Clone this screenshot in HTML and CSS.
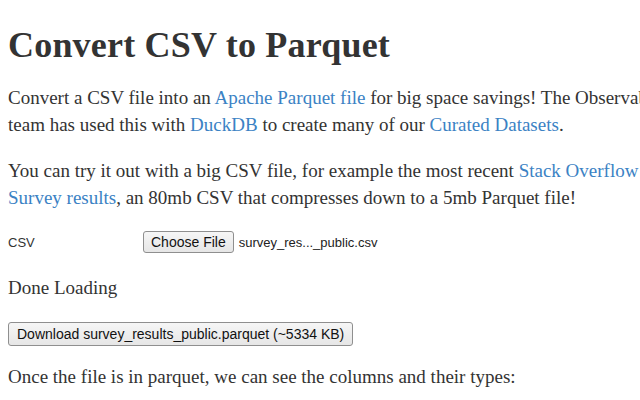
FILE: index.html
```html
<!DOCTYPE html>
<html>
<head>
<meta charset="utf-8">
<link rel="stylesheet" href="styles.css">
</head>
<body>
<main class="notebook">
  <h1 class="title">Convert CSV to Parquet</h1>
  <p class="para">Convert a CSV file into an <a href="#">Apache Parquet file</a> for big space savings! The Observable team has used this with <a href="#">DuckDB</a> to create many of our <a href="#">Curated Datasets</a>.</p>
  <p class="para">You can try it out with a big CSV file, for example the most recent <a href="#">Stack Overflow Survey results</a>, an 80mb CSV that compresses down to a 5mb Parquet file!</p>
  <form class="input-row">
    <label class="input-label">CSV</label>
    <div class="file-field">
      <span class="file-btn">Choose File</span>
      <span class="file-name">survey_res..._public.csv</span>
    </div>
  </form>
  <p class="para status">Done Loading</p>
  <div class="download-row">
    <button class="download-btn" type="button">Download survey_results_public.parquet (~5334 KB)</button>
  </div>
  <p class="para last">Once the file is in parquet, we can see the columns and their types:</p>
</main>
</body>
</html>
```
FILE: styles.css
```css
html, body {
  margin: 0;
  padding: 0;
  background: #fff;
  overflow: hidden;
}
body {
  width: 640px;
  height: 400px;
}
.notebook {
  padding: 0 8px;
  width: 670px;
  color: #333;
  font-family: "Liberation Serif", serif;
  font-size: 19px;
  line-height: 27px;
}
.title {
  margin: 25px 0 0;
  font-size: 36px;
  line-height: 40px;
  font-weight: 700;
  color: #333;
  letter-spacing: 0.2px;
}
.para {
  margin: 19px 0 0;
}
.para a {
  color: #3b82c4;
  text-decoration: none;
}
.input-row {
  display: flex;
  align-items: center;
  margin: 20px 0 0;
  font-family: "Liberation Sans", Arial, sans-serif;
  font-size: 13px;
  color: #333;
  height: 22px;
}
.input-label {
  width: 135px;
}
.file-field {
  display: flex;
  align-items: center;
  gap: 5px;
  color: #222;
}
.file-btn {
  display: inline-block;
  padding: 1px 7px;
  border: 1px solid #8f8f8f;
  border-radius: 3px;
  background: linear-gradient(#f6f6f6, #e6e6e6);
  color: #111;
  font-size: 14px;
  line-height: 18px;
}
.status {
  margin-top: 21px;
}
.download-row {
  margin-top: 18px;
}
.download-btn {
  font-family: "Liberation Sans", Arial, sans-serif;
  font-size: 14px;
  color: #111;
  padding: 2px 8px;
  line-height: 18px;
  border: 1px solid #8f8f8f;
  border-radius: 3px;
  background: linear-gradient(#f6f6f6, #e6e6e6);
}
.last {
  margin-top: 17px;
}
```
